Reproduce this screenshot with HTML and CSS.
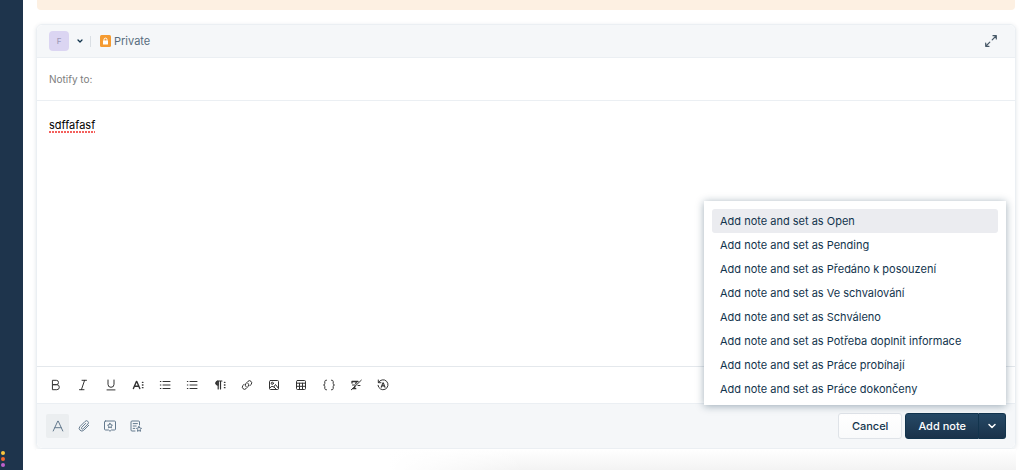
FILE: index.html
```html
<!DOCTYPE html>
<html lang="en">
<head>
  <meta charset="UTF-8">
  <meta name="viewport" content="width=device-width, initial-scale=1.0">
  <title>Add note</title>
  <link rel="stylesheet" href="styles.css">
</head>
<body>
  <nav class="sidebar" aria-label="Apps">
    <a class="apps" href="#" aria-label="Switch app">
      <span class="dot yellow"></span>
      <span class="dot orange"></span>
      <span class="dot purple"></span>
    </a>
  </nav>

  <main class="content">
    <div class="notice"></div>

    <form class="editor">
      <header class="editor-header">
        <button type="button" class="sender" aria-label="Change sender">
          <span class="avatar">F</span>
          <svg width="8" height="8" viewBox="0 0 8 8"><path d="M2 3l2 2 2-2" stroke-width="1.3"/></svg>
        </button>
        <span class="divider"></span>
        <span class="private">
          <svg class="lock" width="11" height="12" viewBox="0 0 11 12"><rect width="11" height="12" rx="1.5" fill="#f59b31"/><rect x="3" y="5.5" width="5" height="4" rx=".5" fill="#fff"/><path d="M4 5.5V4.6a1.5 1.5 0 0 1 3 0v.9" stroke="#fff"/></svg>
          Private
        </span>
        <button type="button" class="expand" aria-label="Expand">
          <svg width="14" height="14" viewBox="0 0 14 14"><path d="M8.2 5.8 12 2M9 1.7h3.3V5M5.8 8.2 2 12M1.7 9v3.3H5" stroke-width="1.2"/></svg>
        </button>
      </header>

      <div class="notify">
        <label for="notify">Notify to:</label>
        <input type="text" id="notify">
      </div>

      <textarea class="note" aria-label="Note" spellcheck="false">sdffafasf</textarea>

      <div class="format-bar">
        <div class="format-tools">
          <button type="button" aria-label="Bold"><svg width="14" height="14" viewBox="0 0 14 14"><path d="M3.8 2.3h3.5a2.2 2.2 0 0 1 0 4.4H3.8zM3.8 6.7h4a2.5 2.5 0 0 1 0 5h-4z"/></svg></button>
          <button type="button" aria-label="Italic"><svg width="14" height="14" viewBox="0 0 14 14"><path d="M6 2.3h4.5M3.5 11.7H8M8.6 2.3 5.4 11.7"/></svg></button>
          <button type="button" aria-label="Underline"><svg width="14" height="14" viewBox="0 0 14 14"><path d="M4 2v4.3a3 3 0 0 0 6 0V2M3 11.9h8"/></svg></button>
          <button type="button" aria-label="Font size"><svg width="14" height="14" viewBox="0 0 14 14"><path d="m2.4 10.5 3-7h.4l3 7M3.6 8.2h4" stroke-width="1.4"/><path d="M11.4 4.3h.6M11.4 7h.6M11.4 9.7h.6" stroke-width="1.3"/></svg></button>
          <button type="button" aria-label="Ordered list"><svg width="14" height="14" viewBox="0 0 14 14"><path d="M2.3 3.5h.6M2.3 7h.6M2.3 10.5h.6M5 3.5h7M5 7h7M5 10.5h7"/></svg></button>
          <button type="button" aria-label="Bullet list"><svg width="14" height="14" viewBox="0 0 14 14"><path d="M2.3 3.5h.6M2.3 7h.6M2.3 10.5h.6M5 3.5h7M5 7h7M5 10.5h7"/></svg></button>
          <button type="button" aria-label="Paragraph"><svg width="14" height="14" viewBox="0 0 14 14"><path d="M4.8 3a2.1 2.1 0 0 0 0 4.3z" fill="currentColor"/><path d="M4.3 3h4.6M5.2 3v8M7.5 3v8" stroke-width="1.2"/><path d="M11.4 4.3h.6M11.4 7h.6M11.4 9.7h.6" stroke-width="1.3"/></svg></button>
          <button type="button" aria-label="Link"><svg width="14" height="14" viewBox="0 0 14 14"><path d="M6 8.7a2.2 2.2 0 0 1-.1-3.1L8 3.3a2.2 2.2 0 0 1 3.2 3L9.8 7.8M8 5.3a2.2 2.2 0 0 1 .1 3.1L6 10.7a2.2 2.2 0 0 1-3.2-3l1.4-1.5"/></svg></button>
          <button type="button" aria-label="Image"><svg width="14" height="14" viewBox="0 0 14 14"><rect x="2.5" y="2.5" width="9" height="9" rx="1"/><circle cx="5.3" cy="5.3" r="1.1"/><path d="m2.8 10 2.2-1.8 1.7.9 1.8-2.6 2.8 3.7M7 9l2.2 2.3"/></svg></button>
          <button type="button" aria-label="Table"><svg width="14" height="14" viewBox="0 0 14 14"><rect x="2.5" y="2.5" width="9" height="9" rx="1"/><path d="M2.5 5.2h9M2.5 8.3h9M5.5 5.2v6.3M8.5 5.2v6.3"/></svg></button>
          <button type="button" aria-label="Code"><svg width="14" height="14" viewBox="0 0 14 14"><path d="M4.5 2.2c-1.3 0-1.7.5-1.7 1.5v1.8C2.8 6.4 2.4 7 1.5 7c.9 0 1.3.6 1.3 1.5v1.8c0 1 .4 1.5 1.7 1.5M9.5 2.2c1.3 0 1.7.5 1.7 1.5v1.8c0 .9.4 1.5 1.3 1.5-.9 0-1.3.6-1.3 1.5v1.8c0 1-.4 1.5-1.7 1.5"/></svg></button>
          <button type="button" aria-label="Clear formatting"><svg width="14" height="14" viewBox="0 0 14 14"><path d="M3 5V3.5h6M7.5 3.5 6.8 5.6M5.900 8.500l-.6 2.200M3.800 10.700h3" stroke-width="1.3"/><path d="M12.300 2.200 2.300 11.800"/><path d="M3.500 7H6M9 7.500h2"/></svg></button>
          <button type="button" aria-label="Restore formatting"><svg width="14" height="14" viewBox="0 0 14 14"><path d="M2.5 4.5a5 5 0 1 1-.5 2.8M2.3 2v2.7H5"/><path d="m5.200 9.300 1.700-4.400h.4L9 9.300M5.800 7.900h2.600" stroke-width="1.1"/></svg></button>
        </div>
      </div>

      <footer class="editor-footer">
        <div class="insert-tools">
          <button type="button" class="active" aria-label="Text formatting"><svg width="14" height="14" viewBox="0 0 14 14"><path d="M2.2 12 6.8 2h.4l4.600 10M3.800 8.700h6.400"/></svg></button>
          <button type="button" aria-label="Attach file"><svg width="14" height="14" viewBox="0 0 14 14"><path d="m11.700 6.300-4.900 4.900a2.600 2.600 0 0 1-3.800-3.700l5.100-5.100a1.900 1.900 0 0 1 2.800 2.600L6.200 9.800a1 1 0 0 1-1.500-1.400l4-4"/></svg></button>
          <button type="button" aria-label="Canned response"><svg width="14" height="14" viewBox="0 0 14 14"><path d="M2.5 2h9a1 1 0 0 1 1 1v7a1 1 0 0 1-1 1H8.400L7 12.300 5.600 11H2.500a1 1 0 0 1-1-1V3a1 1 0 0 1 1-1z"/><path d="m7 4.300.8 1.400 1.600.3-1.100 1.200.2 1.600L7 8.100l-1.500.7.2-1.600L4.600 6l1.600-.3z"/></svg></button>
          <button type="button" aria-label="Solution article"><svg width="14" height="14" viewBox="0 0 14 14"><path d="M6 12H3a1 1 0 0 1-1-1V3a1 1 0 0 1 1-1h6.500a1 1 0 0 1 1 1v3M4.200 4.600h4.200M4.200 7h3M4.200 9.400h1.600"/><path d="m10 7.500.8 1.500 1.700.3-1.200 1.200.2 1.800-1.500-.8-1.500.8.2-1.800-1.200-1.200L9.200 9z"/></svg></button>
        </div>

        <div class="actions">
          <button type="button" class="btn btn-cancel">Cancel</button>
          <div class="split">
            <button type="submit" class="btn btn-add">Add note</button>
            <button type="button" class="btn btn-more" aria-label="More options" aria-expanded="true">
              <svg width="10" height="10" viewBox="0 0 10 10"><path d="m2 3.500 3 3 3-3" stroke-width="1.500"/></svg>
            </button>
          </div>
          <div class="menu">
            <button type="button" class="selected">Add note and set as Open</button>
            <button type="button">Add note and set as Pending</button>
            <button type="button">Add note and set as Předáno k posouzení</button>
            <button type="button">Add note and set as Ve schvalování</button>
            <button type="button">Add note and set as Schváleno</button>
            <button type="button">Add note and set as Potřeba doplnit informace</button>
            <button type="button">Add note and set as Práce probíhají</button>
            <button type="button">Add note and set as Práce dokončeny</button>
          </div>
        </div>
      </footer>
    </form>
    <div class="bottom-shade"></div>
  </main>
</body>
</html>
```
FILE: styles.css
```css
* {
  margin: 0;
  padding: 0;
  box-sizing: border-box;
}
body {
  display: flex;
  min-height: 100vh;
  background: #fff;
  color: #12344d;
  font-family: Inter, "Liberation Sans", sans-serif;
  font-size: 11px;
}
button,
input,
textarea {
  font: inherit;
  color: inherit;
  border: 0;
  background: none;
  outline: none;
}
button {
  display: flex;
  align-items: center;
  justify-content: center;
  cursor: pointer;
}
svg {
  display: block;
  fill: none;
  stroke: currentColor;
  stroke-linecap: round;
  stroke-linejoin: round;
}

/* left rail */
.sidebar {
  display: flex;
  flex-direction: column;
  justify-content: flex-end;
  width: 23px;
  background: #1e344c;
}
.apps {
  display: flex;
  flex-direction: column;
  gap: 2px;
  padding: 0 1px 3px;
}
.dot {
  width: 4px;
  height: 4px;
  border-radius: 50%;
}
.yellow {
  background: #fcc63d;
}
.orange {
  background: #f2652c;
}
.purple {
  background: #bd60cb;
}

.content {
  flex: 1;
  display: flex;
  flex-direction: column;
  padding: 0 8px 0 13px;
}
.notice {
  height: 10px;
  margin: 0 1px 14px;
  border-radius: 0 0 4px 4px;
  background: #fdf0e2;
}

/* note editor */
.editor {
  flex: 1;
  display: flex;
  flex-direction: column;
  border: 1px solid #ebeff3;
  border-radius: 6px;
  box-shadow: 0 1px 4px rgba(18, 52, 77, 0.12);
}
.editor-header {
  display: flex;
  align-items: center;
  height: 33px;
  padding: 0 17px 0 12px;
  border-bottom: 1px solid #ebeff3;
  border-radius: 6px 6px 0 0;
  background: #f5f7f9;
}
.sender {
  gap: 7px;
}
.avatar {
  width: 20px;
  border-radius: 4px;
  background: #dbd5f2;
  color: #a09bb8;
  font-size: 8px;
  font-weight: 500;
  line-height: 20px;
}
.divider {
  width: 1px;
  height: 11px;
  margin: 0 9px 0 6px;
  background: #dadfe4;
}
.private {
  display: flex;
  align-items: center;
  gap: 3px;
  color: #576c7d;
}
.lock {
  stroke: none;
}
.expand {
  margin-left: auto;
  color: #475867;
}
.notify {
  display: flex;
  align-items: center;
  gap: 6px;
  height: 43px;
  padding: 0 12px;
  border-bottom: 1px solid #ebeff3;
  color: #7d7d7d;
  font-size: 10px;
}
.notify input {
  flex: 1;
}
/* the dotted strip marks the misspelt word */
.note {
  flex: 1;
  padding: 16px 12px;
  resize: none;
  background-image: repeating-linear-gradient(to right, #f4605c 0 2px, transparent 2px 3px);
  background-origin: content-box;
  background-position: 0 14px;
  background-size: 46px 2px;
  background-repeat: no-repeat;
  color: #000;
  line-height: 16px;
}
.format-bar {
  height: 37px;
  padding: 6px 7px;
  border-top: 1px solid #e4e8ec;
  color: #333;
}
.format-tools {
  display: flex;
  justify-content: space-between;
  max-width: 351px;
}
.format-tools button {
  width: 24px;
  height: 24px;
}

.editor-footer {
  display: flex;
  align-items: center;
  justify-content: space-between;
  height: 45px;
  padding: 0 9px;
  border-top: 1px solid #ebeff3;
  border-radius: 0 0 6px 6px;
  background: #f5f7f9;
}
.insert-tools {
  display: flex;
  gap: 3px;
  color: #647a8e;
}
.insert-tools button {
  width: 23px;
  height: 24px;
  border-radius: 2px;
}
.insert-tools .active {
  background: #ebeef0;
}
.actions {
  position: relative;
  display: flex;
  gap: 3px;
}
.btn {
  height: 26px;
  border-radius: 3px;
  font-weight: 500;
}
.btn-cancel {
  padding: 0 13px;
  border: 1px solid #dfe3e8;
  background: linear-gradient(#fff, #f9fafb);
}
.split {
  display: flex;
}
.btn-add,
.btn-more {
  border: 1px solid #12344d;
  background: linear-gradient(#264966, #1a324a);
  color: #fff;
}
.btn-add {
  padding: 0 12px;
  border-radius: 3px 0 0 3px;
}
.btn-more {
  width: 27px;
  border-left: 0;
  border-radius: 0 3px 3px 0;
}

.menu {
  position: absolute;
  right: 0;
  bottom: 34px;
  width: 302px;
  padding: 8px 8px 4px;
  background: #fff;
  box-shadow: 0 1px 8px rgba(18, 52, 77, 0.4);
}
.menu button {
  width: 100%;
  height: 24px;
  padding: 0 8px;
  border-radius: 3px;
  justify-content: flex-start;
}
.menu .selected {
  background: #ebecf0;
}

.bottom-shade {
  height: 21px;
  background: linear-gradient(to right, #fff 36%, transparent 50%), linear-gradient(#fff, #f3f3f3);
}
```
